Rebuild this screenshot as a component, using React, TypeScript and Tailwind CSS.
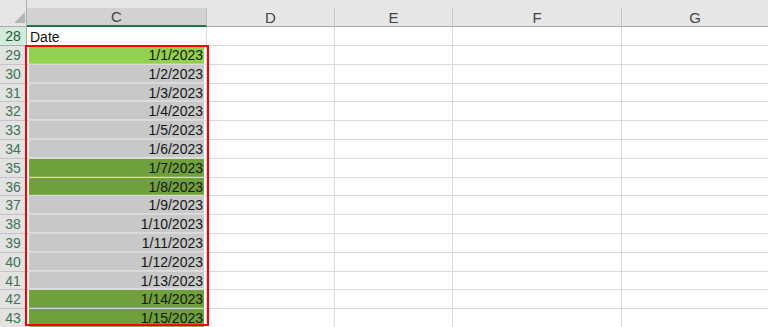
import React from "react";

const heights = [19, 19, 18, 19, 19, 19, 19, 18, 19, 19, 19, 19, 18, 19, 19];
type Kind = "light" | "dark" | "gray";
const rows: { n: number; date: string; kind: Kind }[] = [
  { n: 29, date: "1/1/2023", kind: "light" },
  { n: 30, date: "1/2/2023", kind: "gray" },
  { n: 31, date: "1/3/2023", kind: "gray" },
  { n: 32, date: "1/4/2023", kind: "gray" },
  { n: 33, date: "1/5/2023", kind: "gray" },
  { n: 34, date: "1/6/2023", kind: "gray" },
  { n: 35, date: "1/7/2023", kind: "dark" },
  { n: 36, date: "1/8/2023", kind: "dark" },
  { n: 37, date: "1/9/2023", kind: "gray" },
  { n: 38, date: "1/10/2023", kind: "gray" },
  { n: 39, date: "1/11/2023", kind: "gray" },
  { n: 40, date: "1/12/2023", kind: "gray" },
  { n: 41, date: "1/13/2023", kind: "gray" },
  { n: 42, date: "1/14/2023", kind: "dark" },
  { n: 43, date: "1/15/2023", kind: "dark" },
];

const fillClass: Record<Kind, string> = {
  light: "bg-[#92d050] border-[#a8d878]",
  dark: "bg-[#70a03c] border-[#86b058]",
  gray: "bg-[#c8c8c8] border-[#dcdcdc]",
};

function EmptyCells() {
  return (
    <>
      <div className="w-[128px] shrink-0 border-r border-b border-[#d9d9d9]" />
      <div className="w-[118px] shrink-0 border-r border-b border-[#d9d9d9]" />
      <div className="w-[169px] shrink-0 border-r border-b border-[#d9d9d9]" />
      <div className="w-[146px] shrink-0 border-b border-[#d9d9d9]" />
    </>
  );
}

export default function App() {
  return (
    <div
      className="relative w-[768px] h-[327px] overflow-hidden bg-white"
      style={{ fontFamily: '"Liberation Sans", Arial, sans-serif' }}
    >
      {/* Column headers */}
      <div className="flex h-[27px] bg-[#e6e6e6] items-end text-[15px] text-[#444444]">
        <div className="relative w-[27px] h-[27px] shrink-0 border-r border-b border-[#ababab]">
          <svg className="absolute left-[14px] top-[12px]" width="11" height="11" viewBox="0 0 11 11">
            <polygon points="11,0 11,11 0,11" fill="#b5b5b5" />
          </svg>
        </div>
        <div className="w-[180px] h-[19px] shrink-0 bg-[#d2d2d2] border-r border-[#bdbdbd] border-b-2 border-b-[#217346] flex items-center justify-center leading-none">
          C
        </div>
        <div className="w-[128px] h-[19px] shrink-0 border-r border-[#c8c8c8] border-b border-b-[#ababab] flex items-center justify-center leading-none">
          D
        </div>
        <div className="w-[118px] h-[19px] shrink-0 border-r border-[#c8c8c8] border-b border-b-[#ababab] flex items-center justify-center leading-none">
          E
        </div>
        <div className="w-[169px] h-[19px] shrink-0 border-r border-[#c8c8c8] border-b border-b-[#ababab] flex items-center justify-center leading-none">
          F
        </div>
        <div className="w-[146px] h-[19px] shrink-0 border-b border-b-[#ababab] flex items-center justify-center leading-none">
          G
        </div>
      </div>

      {/* Row 28 */}
      <div className="flex h-[19px] text-[14px] leading-none">
        <div className="w-[27px] shrink-0 bg-[#d3ebdb] text-[#1e5c36] border-r border-b border-[#ababab] flex items-center justify-center">
          28
        </div>
        <div className="w-[180px] shrink-0 border-r border-b border-[#d9d9d9] flex items-center pl-[3px] pt-[1px] text-[#111111]">
          Date
        </div>
        <EmptyCells />
      </div>

      {/* Data rows */}
      {rows.map((r, i) => (
        <div
          key={r.n}
          className="flex text-[14px] leading-none"
          style={{ height: heights[i] }}
        >
          <div className="w-[27px] shrink-0 bg-[#e2e2e2] text-[#3f7352] border-r border-b border-[#c4c4c4] flex items-center justify-center">
            {r.n}
          </div>
          <div className="w-[180px] shrink-0 border-r border-b border-[#d9d9d9] bg-white">
            <div
              className={`h-full ml-[2px] mr-[2px] border-b flex items-center justify-end pr-[1px] pt-[1px] text-[#151515] ${fillClass[r.kind]}`}
            >
              {r.date}
            </div>
          </div>
          <EmptyCells />
        </div>
      ))}

      {/* Selection / highlight box */}
      <div className="absolute left-[25px] top-[45px] w-[184px] h-[281px] border-2 border-[#ff0000] pointer-events-none" />
    </div>
  );
}
